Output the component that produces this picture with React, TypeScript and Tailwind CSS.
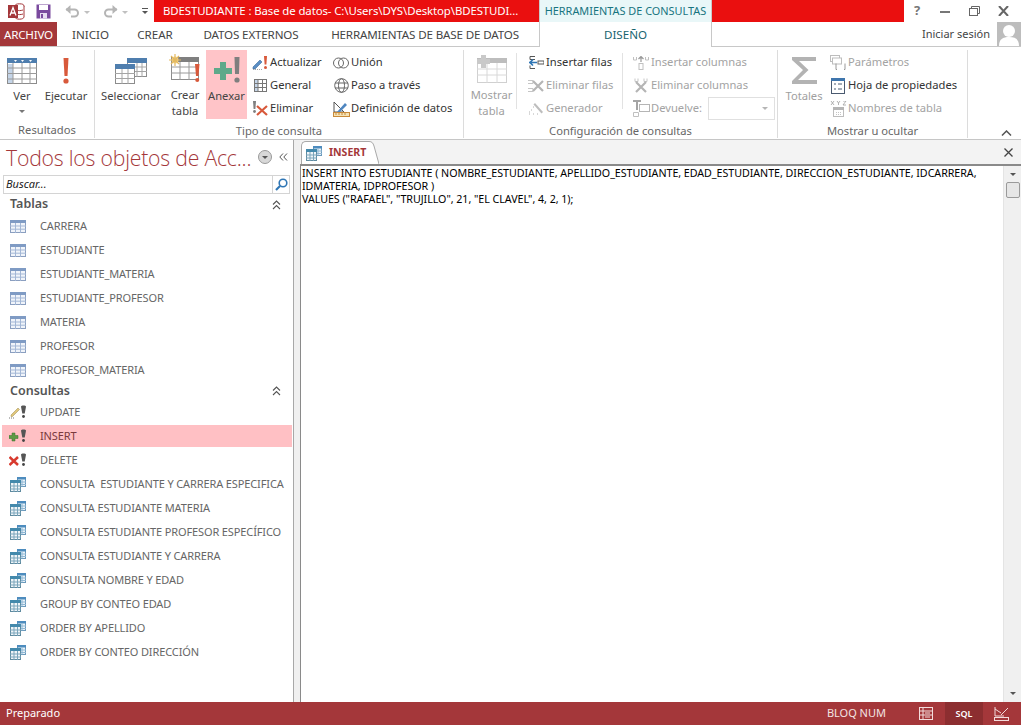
import React from 'react';

const RED = '#a4373a';

const DbLogo = () => (
  <svg width="18" height="17" viewBox="0 0 18 17">
    <ellipse cx="12.5" cy="3" rx="4.5" ry="2.2" fill="none" stroke="#a4373a" />
    <path d="M8 3v11c0 1.2 2 2.2 4.5 2.2S17 15.200 17 14V3" fill="#fff" stroke="#a4373a" />
    <path d="M10 7c1.500.8 3.500.8 6 0M10 11c1.500.8 3.500.8 6 0" stroke="#a4373a" fill="none" />
    <rect x="1" y="2" width="10" height="13" fill="#a4373a" />
    <path d="M3 12.500 6 4.500l3 8M4 10h4" stroke="#fff" strokeWidth="1.300" fill="none" />
  </svg>
);

const SaveIcon = () => (
  <svg width="15" height="15" viewBox="0 0 15 15">
    <rect x="0.500" y="0.500" width="14" height="14" fill="#7a4a9e" />
    <rect x="3" y="1" width="9" height="5" fill="#fff" />
    <rect x="4" y="9" width="7" height="5.500" fill="#e6dcf0" />
    <rect x="5" y="10" width="2" height="4" fill="#7a4a9e" />
  </svg>
);

const ArrowCurve = ({ flip }: { flip?: boolean }) => (
  <svg width="15" height="13" viewBox="0 0 15 13" className={flip ? '-scale-x-100' : ''}>
    <path d="M1 4.500h8.500a3.500 3.500 0 0 1 0 7H6" fill="none" stroke="#b5b5b5" strokeWidth="2" />
    <path d="M5.500 0 .5 4.500 5.500 9z" fill="#b5b5b5" />
  </svg>
);

const Caret = ({ color = '#9a9a9a' }: { color?: string }) => (
  <svg width="6" height="3" viewBox="0 0 6 3"><path d="M0 0h6L3 3z" fill={color} /></svg>
);

const VerIcon = () => (
  <svg width="30" height="26" viewBox="0 0 30 26">
    <rect x="0.500" y="0.500" width="29" height="25" fill="#fff" stroke="#8c8c8c" />
    <rect x="1" y="6" width="5" height="19" fill="#c5d5e8" />
    <rect x="0" y="0" width="30" height="5" fill="#4f7eae" />
    <path d="M7 2h3L8.500 4zM14 2h3l-1.500 2zM22 2h3l-1.500 2z" fill="#fff" />
    <path d="M0 10h30M0 15.500h30M0 21h30M6 5v21M15 5v21M23 5v21" stroke="#9a9a9a" />
  </svg>
);

const Bang = ({ h = 26, color = '#d8593b', w = 6 }: { h?: number; color?: string; w?: number }) => (
  <svg width={w} height={h} viewBox="0 0 6 26">
    <path d="M.5 0h5L4.500 18h-3z" fill={color} />
    <circle cx="3" cy="23" r="2.600" fill={color} />
  </svg>
);

const SeleccionarIcon = () => (
  <svg width="32" height="26" viewBox="0 0 32 26">
    <rect x="12.500" y="0.500" width="19" height="18" fill="#fff" stroke="#8c8c8c" />
    <rect x="12" y="0" width="20" height="5" fill="#4f7eae" />
    <path d="M12 9h20M12 13.500h20M22 5v14M27 5v14" stroke="#a5a5a5" />
    <rect x="0.500" y="6.500" width="19" height="19" fill="#fff" stroke="#8c8c8c" />
    <rect x="0" y="6" width="20" height="5" fill="#4f7eae" />
    <path d="M0 15.500h20M0 20.500h20M7 11v15M13 11v15" stroke="#a5a5a5" />
  </svg>
);

const CrearTablaIcon = () => (
  <svg width="32" height="29" viewBox="0 0 32 29">
    <rect x="2.500" y="3.500" width="27" height="22" fill="#fff" stroke="#8c8c8c" />
    <rect x="2" y="3" width="28" height="5" fill="#7f7f7f" />
    <path d="M2 13h28M2 19h28M11 8v18M20 8v18" stroke="#9a9a9a" />
    <circle cx="6" cy="6" r="3.500" fill="#f3d58e" />
    <path d="M6 0v12M0 6h12M2 2l8 8M10 2l-8 8" stroke="#e3b85e" strokeWidth="1.200" />
    <g transform="translate(26 10)"><path d="M0 0h4.500L3.500 12H1z" fill="#d8593b" /><circle cx="2.250" cy="16" r="2" fill="#d8593b" /></g>
  </svg>
);

const AnexarIcon = () => (
  <svg width="26" height="27" viewBox="0 0 26 27">
    <path d="M7 8h6v6h6v6h-6v6H7v-6H1v-6h6z" transform="translate(-1 -3)" fill="#5fa98a" />
    <path d="M20.500 0h5L25 17h-4z" fill="#7f7f7f" />
    <circle cx="23" cy="23" r="2.600" fill="#7f7f7f" />
  </svg>
);

const ActualizarIcon = () => (
  <svg width="16" height="14" viewBox="0 0 16 14">
    <path d="M1 11 8 4l2 2-7 7H1z" fill="#5a8ec4" stroke="#3d6b9c" strokeWidth=".6" />
    <path d="M1 13.500h10" stroke="#a5a5a5" strokeDasharray="1 1" />
    <path d="M12 0h3l-.6 8.500h-1.800z" fill="#d8593b" />
    <circle cx="13.500" cy="11.500" r="1.500" fill="#d8593b" />
  </svg>
);

const GeneralIcon = () => (
  <svg width="13" height="13" viewBox="0 0 13 13">
    <rect x=".5" y=".5" width="12" height="12" fill="#fff" stroke="#777" />
    <rect x="1" y="1" width="3" height="11" fill="#c5d5e8" />
    <path d="M0 4.500h13M0 8.500h13M4 0v13M8.500 0v13" stroke="#777" />
  </svg>
);

const EliminarIcon = () => (
  <svg width="15" height="15" viewBox="0 0 15 15">
    <path d="M0 0h3l-.6 8H.6z" fill="#7f7f7f" />
    <circle cx="1.500" cy="10.500" r="1.400" fill="#7f7f7f" />
    <path d="m4 5 10 9M14 5 4 14" stroke="#d8593b" strokeWidth="2.200" />
  </svg>
);

const UnionIcon = () => (
  <svg width="16" height="14" viewBox="0 0 16 14">
    <circle cx="5.500" cy="7" r="5" fill="none" stroke="#666" />
    <circle cx="10.500" cy="7" r="5" fill="none" stroke="#666" />
  </svg>
);

const GlobeIcon = () => (
  <svg width="15" height="15" viewBox="0 0 15 15" fill="none" stroke="#666">
    <circle cx="7.500" cy="7.500" r="6.800" />
    <ellipse cx="7.500" cy="7.500" rx="3" ry="6.800" />
    <path d="M1 5h13M1 10h13" />
  </svg>
);

const DefinicionIcon = () => (
  <svg width="17" height="16" viewBox="0 0 17 16">
    <path d="M1 1v10h10z" fill="none" stroke="#555" />
    <path d="M4 11 12 2l2 2-8 8z" fill="#4f86c0" />
    <rect x="0.500" y="11.500" width="16" height="4" fill="#f5e3b5" stroke="#c98a3a" />
    <path d="M3 12v2M6 12v2M9 12v2M12 12v2" stroke="#c98a3a" />
  </svg>
);

const MostrarIcon = () => (
  <svg width="30" height="28" viewBox="0 0 30 28">
    <rect x="0.500" y="3.500" width="29" height="24" fill="#fff" stroke="#d0d0d0" />
    <rect x="0" y="3" width="30" height="5" fill="#bdbdbd" />
    <path d="M0 14h30M0 20h30M10 8v20M20 8v20" stroke="#d8d8d8" />
    <path d="M4 0h5v4h4v5H9v4H4V9H0V4h4z" fill="#c9c9c9" />
  </svg>
);

const InsertarFilasIcon = () => (
  <svg width="15" height="15" viewBox="0 0 15 15">
    <path d="M1 1.500h5M1 1.500v3h5M1 10.500v3h5" stroke="#555" fill="none" />
    <path d="M0 7.500h8M4 4.500 1 7.500l3 3" stroke="#2f76b5" strokeWidth="1.600" fill="none" />
    <rect x="9" y="6" width="6" height="3" fill="none" stroke="#555" />
  </svg>
);

const EliminarFilasIcon = () => (
  <svg width="16" height="14" viewBox="0 0 16 14">
    <path d="M0 1.500h5v3H0M0 9.500h5v3H0" stroke="#c5c5c5" fill="none" />
    <path d="m5 2 10 10M15 2 5 12" stroke="#b5b5b5" strokeWidth="2.200" />
  </svg>
);

const GeneradorIcon = () => (
  <svg width="16" height="15" viewBox="0 0 16 15">
    <path d="M7 2 15 11l-1.500 1.500L5.500 3.500z" fill="#bdbdbd" />
    <path d="M1 13h2M5 13h2M9 13h2M3 9h2M1 11h1M6 6H4" stroke="#b0b0b0" strokeDasharray="1 1" />
  </svg>
);

const InsertarColIcon = () => (
  <svg width="16" height="14" viewBox="0 0 16 14" fill="none" stroke="#c0c0c0">
    <path d="M.5 1v3h3V1M12.500 1v3h3V1" />
    <path d="M8 0v6M5.500 3 8 .5 10.500 3" stroke="#9a9a9a" strokeWidth="1.200" />
    <rect x="6" y="7.500" width="4" height="6" />
  </svg>
);

const EliminarColIcon = () => (
  <svg width="16" height="15" viewBox="0 0 16 15">
    <path d="M2 .5v3h3v-3M11 .5v3h3v-3" fill="none" stroke="#c5c5c5" />
    <path d="m3 4 10 10M13 4 3 14" stroke="#b5b5b5" strokeWidth="2.200" />
  </svg>
);

const DevuelveIcon = () => (
  <svg width="17" height="17" viewBox="0 0 17 17">
    <path d="M0 0h8v2H5v8H3V2H0z" fill="#a5a5a5" />
    <rect x="6.500" y="4.500" width="10" height="7" fill="#fff" stroke="#b5b5b5" />
    <path d="M.5 12.500h5v4h-5z" fill="none" stroke="#c0c0c0" />
  </svg>
);

const SigmaIcon = () => (
  <svg width="25" height="27" viewBox="0 0 25 27">
    <path d="M0 0h24v4H7l9.500 9L6 23h19v4H0v-3l11-11L0 3z" fill="#b3b3b3" />
  </svg>
);

const ParametrosIcon = () => (
  <svg width="16" height="15" viewBox="0 0 16 15" fill="none" stroke="#bdbdbd">
    <rect x=".5" y=".5" width="9" height="6" fill="#fff" />
    <rect x="2.500" y="3" width="9" height="6" fill="#fff" />
    <path d="M6 8.500v6h1M15 8.500v6h-1" stroke="#999" />
  </svg>
);

const HojaIcon = () => (
  <svg width="14" height="16" viewBox="0 0 14 16">
    <rect x=".5" y=".5" width="13" height="15" fill="#fff" stroke="#4a5a70" />
    <rect x="0" y="0" width="14" height="3" fill="#3f76ad" />
    <path d="M3 6h2M3 11h2M7 6h4M7 11h4" stroke="#4a5a70" />
  </svg>
);

const NombresIcon = () => (
  <svg width="17" height="16" viewBox="0 0 17 16">
    <rect x="3.500" y="6.500" width="10" height="9" fill="#fff" stroke="#bdbdbd" />
    <rect x="3" y="6" width="11" height="3" fill="#b5b5b5" />
    <path d="M6 11.500h6M6 13.500h6" stroke="#c5c5c5" strokeDasharray="1 1" />
    <path d="m1 0 3 4M4 0 1 4M7 0l1.500 2L10 0M8.500 2v2M13 0h3l-3 4h3" stroke="#a0a0a0" fill="none" strokeWidth=".8" />
  </svg>
);

const SmallTable = () => (
  <svg width="16" height="13" viewBox="0 0 16 13">
    <rect x=".5" y=".5" width="15" height="12" fill="#f0f4fa" stroke="#8b9fc0" />
    <rect x="0" y="0" width="16" height="3" fill="#7f9bc4" />
    <path d="M0 6h16M0 9.200h16M5.500 3v10M10.500 3v10" stroke="#a3b7d6" />
  </svg>
);

const QueryIcon = () => (
  <svg width="16" height="15" viewBox="0 0 16 15">
    <rect x="7.500" y=".5" width="8" height="9" fill="#e9f2f8" stroke="#6a99bb" />
    <rect x="7" y="0" width="9" height="2.500" fill="#4d8cbe" />
    <path d="M7 5h9M7 7.500h9M12 2.500v7" stroke="#8fb7d4" />
    <rect x=".5" y="3.500" width="10" height="11" fill="#eef4f8" stroke="#5f8a9f" />
    <rect x="0" y="3" width="11" height="3" fill="#4389ac" />
    <path d="M0 9h11M0 12h11M4 6v9M7.500 6v9" stroke="#7aa5bb" />
  </svg>
);

const ActionQuery = ({ kind }: { kind: 'update' | 'insert' | 'delete' }) => (
  <svg width="18" height="15" viewBox="0 0 18 15">
    {kind === 'update' && <><path d="M2 10 9 3l1.500 1.500-7 7H2z" fill="#e0c67a" stroke="#9a8a50" strokeWidth=".5" /><path d="M0 13h5" stroke="#777" strokeDasharray="1 1" /></>}
    {kind === 'insert' && <path d="M3 4h3v2.500h3v3H6V12H3V9.500H0v-3h3z" fill="#5d9b45" stroke="#3b6e2d" strokeWidth=".5" />}
    {kind === 'delete' && <path d="m.5 4 8.500 8M9 4 .5 12" stroke="#d83a2e" strokeWidth="2.500" />}
    <path d="M12 1.500c0-1.500 5-1.500 5 0l-1.300 7h-2.400z" fill="#555" />
    <circle cx="14.500" cy="11.500" r="1.400" fill="#444" />
  </svg>
);

const ChevronsUp = () => (
  <svg width="9" height="10" viewBox="0 0 9 10" fill="none" stroke="#555" strokeWidth="1.100">
    <path d="m1 4.500 3.500-3.500L8 4.500M1 9l3.500-3.500L8 9" />
  </svg>
);

const LargeBtn = ({ icon, label, width, disabled, active, caret }: { icon: React.ReactNode; label: string[]; width: number; disabled?: boolean; active?: boolean; caret?: boolean }) => (
  <div
    className={`flex flex-col items-center h-[69px] shrink-0 ${active ? 'bg-[#ffc4c8]' : ''} ${disabled ? 'text-[#9f9f9f]' : 'text-[#444]'}`}
    style={{ width }}
  >
    <div className="h-[37px] flex items-end justify-center pb-[3px]">{icon}</div>
    <div className="mt-[1px] leading-[16px] text-center whitespace-nowrap">
      {label.map((l) => <div key={l}>{l}</div>)}
      {caret && <div className="flex justify-center pt-[6px]"><Caret color="#777" /></div>}
    </div>
  </div>
);

const SmallBtn = ({ icon, label, disabled, iconW = 20, after }: { icon: React.ReactNode; label: string; disabled?: boolean; iconW?: number; after?: React.ReactNode }) => (
  <div className={`h-[23px] flex items-center whitespace-nowrap ${disabled ? 'text-[#a3a3a3]' : 'text-[#333]'}`}>
    <div className="flex justify-center shrink-0" style={{ width: iconW }}>{icon}</div>
    <span>{label}</span>
    {after}
  </div>
);

const RibbonGroup = ({ width, label, children }: { width: number; label: string; children: React.ReactNode }) => (
  <div className="flex flex-col shrink-0 h-[88px] mt-[3px] border-r border-[#dcdcdc]" style={{ width }}>
    <div className="flex h-[71px]">{children}</div>
    <div className="text-center text-[#666] leading-[16px] mt-[3px] whitespace-nowrap">{label}</div>
  </div>
);

const tablas = ['CARRERA', 'ESTUDIANTE', 'ESTUDIANTE_MATERIA', 'ESTUDIANTE_PROFESOR', 'MATERIA', 'PROFESOR', 'PROFESOR_MATERIA'];
const consultas = [
  'CONSULTA  ESTUDIANTE Y CARRERA ESPECIFICA',
  'CONSULTA ESTUDIANTE MATERIA',
  'CONSULTA ESTUDIANTE PROFESOR ESPECÍFICO',
  'CONSULTA ESTUDIANTE Y CARRERA',
  'CONSULTA NOMBRE Y EDAD',
  'GROUP BY CONTEO EDAD',
  'ORDER BY APELLIDO',
  'ORDER BY CONTEO DIRECCIÓN',
];

const NavRow = ({ icon, label, selected }: { icon: React.ReactNode; label: string; selected?: boolean }) => (
  <div className={`h-[24px] flex items-center ml-[2px] w-[290px] text-[11px] ${selected ? 'text-[#7a3a3c]' : 'text-[#666]'}`}>
    <div className={`w-full h-[22px] flex items-center ${selected ? 'bg-[#ffc0c4]' : ''}`}>
      <div className="w-[38px] pr-[6px] flex justify-center shrink-0">{icon}</div>
      <span className="whitespace-pre tracking-[-0.12px]">{label}</span>
    </div>
  </div>
);

const NavHeader = ({ label, h }: { label: string; h: number }) => (
  <div className="flex items-center justify-between pl-[10px] pr-[12px] font-semibold text-[12.5px] text-[#555]" style={{ height: h }}>
    <span>{label}</span>
    <ChevronsUp />
  </div>
);

export default function App() {
  return (
    <div className="w-[1021px] h-[725px] flex flex-col overflow-hidden bg-white text-[11.2px] font-['Noto_Sans','Open_Sans',sans-serif]">
      {/* barra de titulo */}
      <div className="h-[22px] flex shrink-0">
        <div className="w-[154px] flex items-center shrink-0 pl-[7px]">
          <DbLogo />
          <div className="ml-[11px]"><SaveIcon /></div>
          <div className="ml-[14px]"><ArrowCurve /></div>
          <div className="ml-[4px] mb-[-2px]"><Caret color="#c0c0c0" /></div>
          <div className="ml-[13px]"><ArrowCurve flip /></div>
          <div className="ml-[4px] mb-[-2px]"><Caret color="#c0c0c0" /></div>
          <div className="ml-[14px] flex flex-col items-center gap-[2px]">
            <div className="w-[6px] h-[1px] bg-[#555]" />
            <Caret color="#555" />
          </div>
        </div>
        <div className="w-[385px] bg-[#ea0f0f] text-white text-[11.4px] flex items-center pl-[9px] whitespace-nowrap shrink-0 tracking-[-0.1px]">
          BDESTUDIANTE : Base de datos- C:\Users\DYS\Desktop\BDESTUDI...
        </div>
        <div className="w-[173px] bg-[#e9f7f8] text-[#17747f] flex items-center justify-center whitespace-nowrap shrink-0 border-l border-r border-[#c9c9c9] text-[10.9px]">
          HERRAMIENTAS DE CONSULTAS
        </div>
        <div className="w-[192px] bg-[#ea0f0f] shrink-0" />
        <div className="flex-1 flex items-center pl-[10px] text-[#666]">
          <span className="font-bold text-[13px] w-[24px] text-[#777]">?</span>
          <div className="w-[10px] h-[2px] bg-[#777] ml-[2px] mt-[2px]" />
          <svg width="11" height="10" viewBox="0 0 11 10" className="ml-[19px]" fill="none" stroke="#666"><rect x=".5" y="2.500" width="8" height="7" /><path d="M2.500 2.500v-2h8v7h-2" /></svg>
          <svg width="11" height="10" viewBox="0 0 11 10" className="ml-[18px]" stroke="#666" strokeWidth="2"><path d="m1 0 9 10M10 0 1 10" /></svg>
        </div>
      </div>

      {/* pestanas */}
      <div className="h-[25px] flex shrink-0 border-b border-[#c8c8c8] text-[11.6px] text-[#444]">
        <div className="w-[57px] h-[24px] pt-[1px] bg-[#a4373a] text-white flex items-center justify-center shrink-0 tracking-[-0.2px]">ARCHIVO</div>
        <div className="w-[67px] pt-[1px] flex items-center justify-center shrink-0">INICIO</div>
        <div className="w-[62px] pt-[1px] flex items-center justify-center shrink-0">CREAR</div>
        <div className="w-[130px] pt-[1px] flex items-center justify-center shrink-0 tracking-[-0.15px] whitespace-nowrap">DATOS EXTERNOS</div>
        <div className="w-[223px] pt-[1px] pr-[5px] flex items-center justify-center shrink-0 tracking-[-0.15px] whitespace-nowrap">HERRAMIENTAS DE BASE DE DATOS</div>
        <div className="w-[173px] h-[25px] bg-white border-l border-r border-[#c8c8c8] text-[#17646f] flex items-center justify-center shrink-0">DISEÑO</div>
        <div className="flex-1 flex items-center justify-end">
          <span className="mr-[7px] text-[11px] text-[#444]">Iniciar sesión</span>
          <div className="w-[24px] h-[24px] bg-[#bdbdbd] overflow-hidden">
            <svg width="24" height="24" viewBox="0 0 24 24"><circle cx="12" cy="9" r="6" fill="#fff" /><path d="M2 24c0-7 4-9 10-9s10 2 10 9z" fill="#fff" /></svg>
          </div>
        </div>
      </div>

      {/* cinta */}
      <div className="h-[93px] flex shrink-0 border-b border-[#c6c6c6] bg-white">
        <RibbonGroup width={95} label="Resultados">
          <div className="w-[7px]" />
          <LargeBtn width={30} label={['Ver']} caret icon={<VerIcon />} />
          <div className="w-[6px]" />
          <LargeBtn width={46} label={['Ejecutar']} icon={<Bang />} />
        </RibbonGroup>
        <RibbonGroup width={369} label="Tipo de consulta">
          <div className="w-[4px]" />
          <LargeBtn width={64} label={['Seleccionar']} icon={<SeleccionarIcon />} />
          <div className="w-[3px]" />
          <LargeBtn width={38} label={['Crear', 'tabla']} icon={<CrearTablaIcon />} />
          <div className="w-[2px]" />
          <LargeBtn width={41} active label={['Anexar']} icon={<AnexarIcon />} />
          <div className="w-[3px]" />
          <div className="flex flex-col w-[81px] shrink-0 pt-[1px]">
            <SmallBtn label="Actualizar" icon={<ActualizarIcon />} />
            <SmallBtn label="General" icon={<GeneralIcon />} />
            <SmallBtn label="Eliminar" icon={<EliminarIcon />} />
          </div>
          <div className="flex flex-col pt-[1px]">
            <SmallBtn label="Unión" icon={<UnionIcon />} />
            <SmallBtn label="Paso a través" icon={<GlobeIcon />} />
            <SmallBtn label="Definición de datos" icon={<DefinicionIcon />} />
          </div>
        </RibbonGroup>
        <RibbonGroup width={314} label="Configuración de consultas">
          <div className="w-[6px]" />
          <LargeBtn width={43} disabled label={['Mostrar', 'tabla']} icon={<MostrarIcon />} />
          <div className="w-[3px]" />
          <div className="w-[1px] h-[56px] bg-[#e2e2e2] mt-[3px]" />
          <div className="w-[9px]" />
          <div className="flex flex-col w-[96px] shrink-0 pt-[1px]">
            <SmallBtn label="Insertar filas" icon={<InsertarFilasIcon />} />
            <SmallBtn label="Eliminar filas" disabled icon={<EliminarFilasIcon />} />
            <SmallBtn label="Generador" disabled icon={<GeneradorIcon />} />
          </div>
          <div className="w-[1px] h-[56px] bg-[#e2e2e2] mt-[3px] mr-[8px]" />
          <div className="flex flex-col pt-[1px]">
            <SmallBtn label="Insertar columnas" disabled icon={<InsertarColIcon />} />
            <SmallBtn label="Eliminar columnas" disabled icon={<EliminarColIcon />} />
            <SmallBtn
              label="Devuelve:"
              disabled
              icon={<DevuelveIcon />}
              after={
                <div className="ml-[6px] w-[67px] h-[23px] border border-[#e0e0e0] flex items-center justify-end pr-[6px] shrink-0">
                  <Caret color="#b5b5b5" />
                </div>
              }
            />
          </div>
        </RibbonGroup>
        <RibbonGroup width={190} label="Mostrar u ocultar">
          <div className="w-[4px]" />
          <LargeBtn width={44} disabled label={['Totales']} icon={<SigmaIcon />} />
          <div className="flex flex-col ml-[2px] pt-[1px]">
            <SmallBtn label="Parámetros" disabled icon={<ParametrosIcon />} />
            <SmallBtn label="Hoja de propiedades" icon={<HojaIcon />} />
            <SmallBtn label="Nombres de tabla" disabled icon={<NombresIcon />} />
          </div>
        </RibbonGroup>
        <div className="flex-1 flex items-end justify-end pr-[9px] pb-[3px]">
          <svg width="11" height="6" viewBox="0 0 11 6" fill="none" stroke="#555" strokeWidth="1.500"><path d="m1 5.500 4.500-4.500L10 5.500" /></svg>
        </div>
      </div>

      {/* cuerpo */}
      <div className="flex-1 flex min-h-0">
        <div className="w-[294px] shrink-0 border-r border-[#a8a8a8] flex flex-col">
          <div className="h-[35px] flex items-center pl-[6px] relative shrink-0">
            <span className="text-[21.2px] font-light text-[#a4373a] whitespace-nowrap tracking-[-0.2px] font-['Open_Sans',sans-serif]">Todos los objetos de Acc...</span>
            <div className="absolute left-[258px] top-[10px] w-[14px] h-[14px] rounded-full bg-[#d8d8d8] border border-[#999] flex items-center justify-center">
              <Caret color="#555" />
            </div>
            <svg width="9" height="8" viewBox="0 0 9 8" fill="none" stroke="#555" className="absolute left-[279px] top-[13px]"><path d="M4 .5.8 4 4 7.500M8 .5 4.800 4 8 7.500" /></svg>
          </div>
          <div className="h-[19px] mx-[3px] border border-[#d4d4d4] flex items-center justify-between shrink-0">
            <span className="italic text-[11px] text-[#222] pl-[2px]">Buscar...</span>
            <div className="w-[17px] h-[17px] border-l border-[#d4d4d4] flex items-center justify-center">
              <svg width="13" height="13" viewBox="0 0 13 13" fill="none" stroke="#2f76b5" strokeWidth="1.600"><circle cx="8" cy="5" r="3.800" /><path d="M5 8 1 12" strokeWidth="2.200" /></svg>
            </div>
          </div>
          <div className="pt-[1px]"><NavHeader label="Tablas" h={19} /></div>
          {tablas.map((t) => <NavRow key={t} label={t} icon={<SmallTable />} />)}
          <NavHeader label="Consultas" h={18} />
          <NavRow label="UPDATE" icon={<ActionQuery kind="update" />} />
          <NavRow label="INSERT" selected icon={<ActionQuery kind="insert" />} />
          <NavRow label="DELETE" icon={<ActionQuery kind="delete" />} />
          {consultas.map((c) => <NavRow key={c} label={c} icon={<QueryIcon />} />)}
        </div>
        <div className="w-[6px] bg-[#f0f0f0] shrink-0" />
        <div className="flex-1 flex flex-col min-w-0">
          <div className="h-[26px] bg-[#f3f3f3] flex items-end justify-between shrink-0 border-b-2 border-[#8a8a8a]">
            <div className="flex ml-[1px]">
              <div className="h-[23px] w-[68px] bg-white border-l border-t border-[#a8a8a8] rounded-tl-[5px] flex items-center pl-[4px] gap-[7px] font-bold text-[10.5px] text-[#a4373a]">
                <QueryIcon />
                <span>INSERT</span>
              </div>
              <svg width="10" height="23" viewBox="0 0 10 23" className="block">
                <path d="M0 .5C3 .5 4 2 5 5l5 18H0z" fill="#fff" />
                <path d="M0 .5C3 .5 4 2 5 5l5 18" fill="none" stroke="#a8a8a8" />
              </svg>
            </div>
            <svg width="9" height="9" viewBox="0 0 9 9" stroke="#444" strokeWidth="1.300" className="mb-[7px] mr-[8px]"><path d="m.5.5 8 8M8.500.5l-8 8" /></svg>
          </div>
          <div className="flex-1 flex min-h-0 border-l border-[#8a8a8a]">
            <div className="flex-1 pl-[1px] pt-[1px] text-[10.7px] leading-[13px] text-black font-['Noto_Sans',sans-serif] whitespace-nowrap tracking-[-0.04px]">
              <div>INSERT INTO ESTUDIANTE ( NOMBRE_ESTUDIANTE, APELLIDO_ESTUDIANTE, EDAD_ESTUDIANTE, DIRECCION_ESTUDIANTE, IDCARRERA,</div>
              <div>IDMATERIA, IDPROFESOR )</div>
              <div>VALUES ("RAFAEL", "TRUJILLO", 21, "EL CLAVEL", 4, 2, 1);</div>
            </div>
            <div className="w-[18px] shrink-0 bg-[#f0f0f0] flex flex-col items-center justify-between pt-[7px] pb-[7px] border-l border-[#e4e4e4]">
              <div className="flex flex-col items-center gap-[6px]">
                <Caret color="#555" />
                <div className="w-[14px] h-[16px] border border-[#9a9a9a] rounded-[2px] bg-[#e6e6e6]" />
              </div>
              <Caret color="#555" />
            </div>
          </div>
        </div>
      </div>

      {/* estado */}
      <div className="h-[23px] text-white flex items-center shrink-0 text-[11px]" style={{ backgroundColor: RED }}>
        <span className="pl-[6px]">Preparado</span>
        <span className="ml-auto text-[#f3e3e3]">BLOQ NUM</span>
        <svg width="14" height="13" viewBox="0 0 14 13" fill="none" stroke="#f3dcdc" className="ml-[33px]"><rect x=".5" y=".5" width="13" height="12" /><path d="M4 .5v12M.5 4h13M.5 8h13M6 6h5M6 10h5" /></svg>
        <div className="w-[38px] h-[23px] bg-[#8c2e30] ml-[12px] flex items-center justify-center text-[9px] font-semibold">SQL</div>
        <svg width="15" height="15" viewBox="0 0 15 15" fill="none" stroke="#f3dcdc" className="ml-[11px] mr-[12px]"><path d="M1 1v9h9M1 3l6 4M14 2 7 9" /><rect x=".5" y="11.500" width="14" height="3" /></svg>
      </div>
    </div>
  );
}
